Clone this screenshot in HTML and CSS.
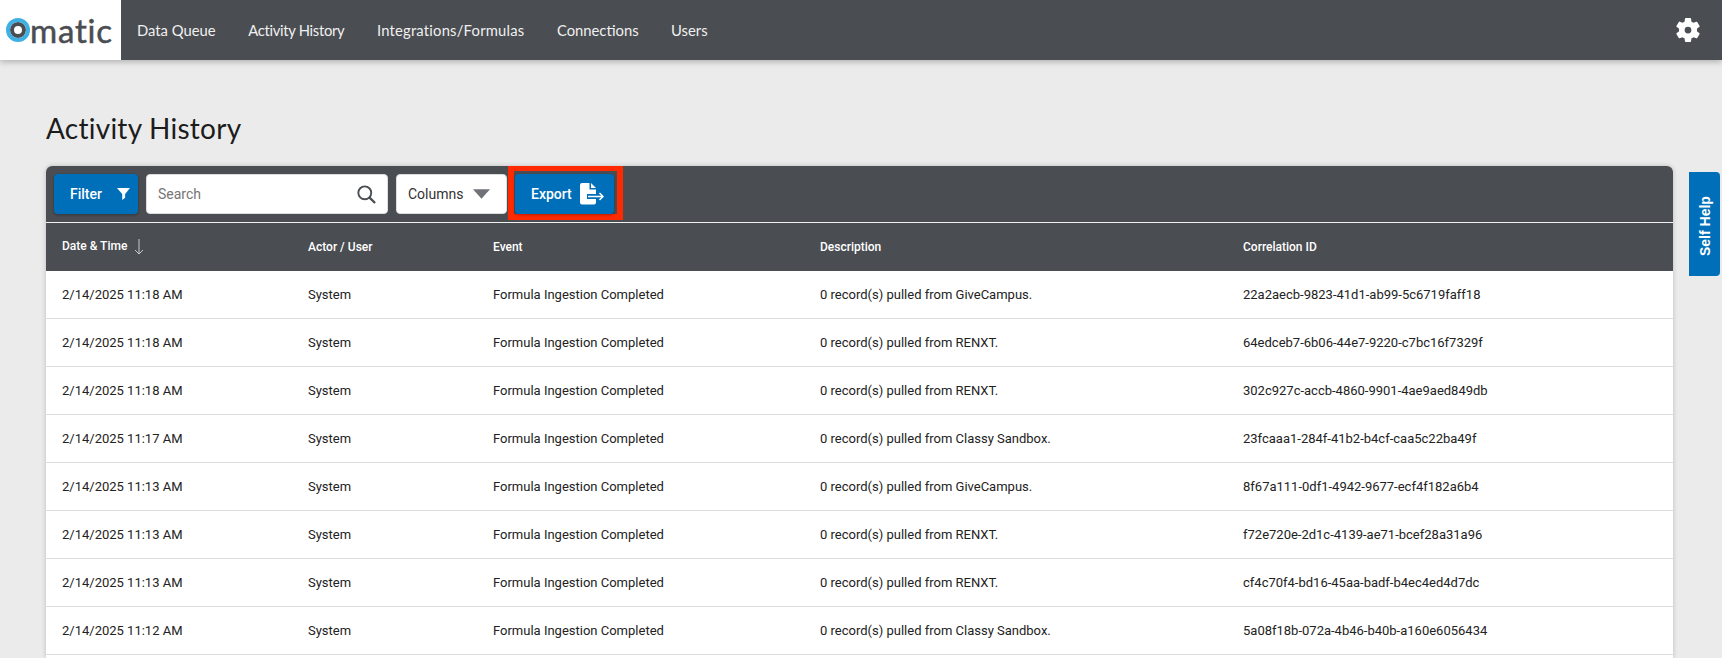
FILE: index.html
```html
<!DOCTYPE html>
<html lang="en">
<head>
    <meta charset="UTF-8">
    <title>Activity History</title>
    <link rel="stylesheet" href="styles.css">
</head>
<body>
    <header class="topbar">
        <a class="logo"><span class="logo-ring"></span><span class="logo-text">matic</span></a>
        <nav class="nav-links">
            <a>Data Queue</a>
            <a class="nav-tight">Activity History</a>
            <a class="nav-wide">Integrations/Formulas</a>
            <a>Connections</a>
            <a>Users</a>
        </nav>
        <svg class="gear" viewBox="0 0 24 24"><path fill-rule="evenodd" d="M19.14 12.94c.04-.3.06-.61.06-.94 0-.32-.02-.64-.07-.94l2.03-1.58c.18-.14.23-.41.12-.61l-1.92-3.32c-.12-.22-.37-.29-.59-.22l-2.39.96c-.5-.38-1.03-.7-1.62-.94l-.36-2.54c-.04-.24-.24-.41-.48-.41h-3.84c-.24 0-.43.17-.47.41l-.36 2.54c-.59.24-1.13.57-1.62.94l-2.39-.96c-.22-.08-.47 0-.59.22L2.74 8.87c-.12.21-.08.47.12.61l2.03 1.58c-.05.3-.09.63-.09.94s.02.64.07.94l-2.03 1.58c-.18.14-.23.41-.12.61l1.92 3.32c.12.22.37.29.59.22l2.39-.96c.5.38 1.03.7 1.62.94l.36 2.54c.05.24.24.41.48.41h3.84c.24 0 .44-.17.47-.41l.36-2.54c.59-.24 1.13-.56 1.62-.94l2.39.96c.22.08.47 0 .59-.22l1.92-3.32c.12-.22.07-.47-.12-.61l-2.01-1.58zM12 14.7a2.7 2.7 0 1 1 0-5.4 2.7 2.7 0 0 1 0 5.4z"/></svg>
    </header>

    <main class="content">
        <h1>Activity History</h1>

        <section class="card">
            <div class="toolbar">
                <button class="btn btn-filter">
                    Filter
                    <svg viewBox="0 0 12 11" width="13" height="12"><path d="M0 0h12L7.500 5.500v3.500L4.800 11V5.500z" fill="#fff"/></svg>
                </button>
                <div class="search">
                    <span>Search</span>
                    <svg viewBox="0 0 20 20" width="19" height="19"><circle cx="8.200" cy="8.200" r="6.800" fill="none" stroke="#4a4d52" stroke-width="2"/><path d="M13 13l6 6" stroke="#4a4d52" stroke-width="2.400"/></svg>
                </div>
                <button class="btn-columns">
                    Columns
                    <svg viewBox="0 0 16 9" width="17" height="10"><path d="M0 0h16L8 9z" fill="#6f7276"/></svg>
                </button>
                <div class="export-mark">
                    <button class="btn btn-export">
                        Export
                        <svg viewBox="0 0 24 22" width="24" height="22">
                            <path d="M2 0h7.500v6.500H16v13a2 2 0 0 1-2 2H2a2 2 0 0 1-2-2V2a2 2 0 0 1 2-2z" fill="#fff"/>
                            <path d="M11 0l5 5h-5z" fill="#fff"/>
                            <rect x="7" y="11" width="10" height="5" fill="#006fba"/>
                            <path d="M8 13.500h15M19.500 10l3.500 3.500-3.500 3.500" fill="none" stroke="#fff" stroke-width="1.500"/>
                        </svg>
                    </button>
                </div>
            </div>

            <table class="history">
                <colgroup>
                    <col class="col-date">
                    <col class="col-actor">
                    <col class="col-event">
                    <col class="col-desc">
                    <col>
                </colgroup>
                <thead>
                    <tr>
                        <th>Date &amp; Time <svg class="sort" viewBox="0 0 10 16" width="10" height="16"><path d="M5 0v15M1 11l4 4 4-4" fill="none" stroke="#c9cacc" stroke-width="1"/></svg></th>
                        <th>Actor / User</th>
                        <th>Event</th>
                        <th>Description</th>
                        <th>Correlation ID</th>
                    </tr>
                </thead>
                <tbody>
                    <tr><td>2/14/2025 11:18 AM</td><td>System</td><td>Formula Ingestion Completed</td><td>0 record(s) pulled from GiveCampus.</td><td>22a2aecb-9823-41d1-ab99-5c6719faff18</td></tr>
                    <tr><td>2/14/2025 11:18 AM</td><td>System</td><td>Formula Ingestion Completed</td><td>0 record(s) pulled from RENXT.</td><td>64edceb7-6b06-44e7-9220-c7bc16f7329f</td></tr>
                    <tr><td>2/14/2025 11:18 AM</td><td>System</td><td>Formula Ingestion Completed</td><td>0 record(s) pulled from RENXT.</td><td>302c927c-accb-4860-9901-4ae9aed849db</td></tr>
                    <tr><td>2/14/2025 11:17 AM</td><td>System</td><td>Formula Ingestion Completed</td><td>0 record(s) pulled from Classy Sandbox.</td><td>23fcaaa1-284f-41b2-b4cf-caa5c22ba49f</td></tr>
                    <tr><td>2/14/2025 11:13 AM</td><td>System</td><td>Formula Ingestion Completed</td><td>0 record(s) pulled from GiveCampus.</td><td>8f67a111-0df1-4942-9677-ecf4f182a6b4</td></tr>
                    <tr><td>2/14/2025 11:13 AM</td><td>System</td><td>Formula Ingestion Completed</td><td>0 record(s) pulled from RENXT.</td><td>f72e720e-2d1c-4139-ae71-bcef28a31a96</td></tr>
                    <tr><td>2/14/2025 11:13 AM</td><td>System</td><td>Formula Ingestion Completed</td><td>0 record(s) pulled from RENXT.</td><td>cf4c70f4-bd16-45aa-badf-b4ec4ed4d7dc</td></tr>
                    <tr><td>2/14/2025 11:12 AM</td><td>System</td><td>Formula Ingestion Completed</td><td>0 record(s) pulled from Classy Sandbox.</td><td>5a08f18b-072a-4b46-b40b-a160e6056434</td></tr>
                </tbody>
            </table>
        </section>
    </main>

    <a class="self-help">Self Help</a>
</body>
</html>
```

FILE: styles.css
```css
* {
    margin: 0;
    padding: 0;
    box-sizing: border-box;
}

html, body {
    height: 658px;
    overflow: hidden;
}

body {
    font-family: Roboto, "Liberation Sans", sans-serif;
    background: #ebebeb;
    color: #222;
}

.topbar {
    height: 60px;
    background: #4a4d52;
    display: flex;
    align-items: center;
    box-shadow: 0 2px 6px rgba(0, 0, 0, 0.25);
    padding-right: 19px;
}

.logo {
    width: 121px;
    height: 60px;
    background: white;
    display: flex;
    align-items: center;
    padding-left: 6px;
}

.logo-ring {
    width: 24px;
    height: 24px;
    border-radius: 50%;
    border: 4px solid #3fb0e3;
    background: white;
    box-shadow: inset 0 0 0 4px #4a4d52;
    flex-shrink: 0;
}

.logo-text {
    font-family: Lato, sans-serif;
    font-size: 33px;
    color: #4a4d52;
    line-height: 1;
    letter-spacing: 0.8px;
    -webkit-text-stroke: 0.5px #4a4d52;
}

.nav-links {
    display: flex;
    gap: 32.5px;
    padding-left: 16px;
    flex: 1;
}

.nav-links a {
    font-family: Lato, sans-serif;
    font-size: 14.8px;
    color: #f0f0f0;
}

/* lato runs a bit off raleway on these two */
.nav-links .nav-tight {
    letter-spacing: -0.3px;
}

.nav-links .nav-wide {
    letter-spacing: 0.2px;
}

.gear {
    width: 30px;
    height: 30px;
    fill: white;
}

.content {
    padding: 0 49px 0 46px;
}

h1 {
    font-family: Lato, sans-serif;
    font-weight: 400;
    font-size: 28px;
    line-height: 36px;
    letter-spacing: 0.25px;
    color: #1c1c1c;
    margin-top: 50px;
    margin-bottom: 20px;
}

.card {
    height: 492px;
    border-radius: 6px 6px 0 0;
    background: white;
    box-shadow: 0 0 5px rgba(0, 0, 0, 0.2);
    overflow: hidden;
}

.toolbar {
    height: 57px;
    background: #4a4d52;
    display: flex;
    align-items: center;
    gap: 8px;
    padding-left: 8px;
    border-bottom: 1px solid #f0f0f0;
}

.btn {
    height: 40px;
    background: #006fba;
    color: white;
    border: none;
    border-radius: 4px;
    font-family: Roboto, sans-serif;
    font-size: 14px;
    font-weight: 500;
    display: flex;
    align-items: center;
    box-shadow: 0 1px 3px rgba(0, 0, 0, 0.3);
}

.btn-filter {
    width: 84px;
    padding-left: 16px;
    gap: 15px;
}

.search {
    width: 242px;
    height: 40px;
    background: white;
    border: 1px solid #ddd;
    border-radius: 4px;
    display: flex;
    align-items: center;
    justify-content: space-between;
    padding: 0 11px 0 11px;
    font-size: 14px;
    color: #757575;
}

.btn-columns {
    width: 111px;
    height: 40px;
    background: white;
    border: 1px solid #ddd;
    border-radius: 4px;
    font-family: Roboto, sans-serif;
    font-size: 14px;
    color: #333;
    display: flex;
    align-items: center;
    gap: 10px;
    padding-left: 11px;
}

.export-mark {
    border: 6px solid #ff2a00;
    height: 55px;
    width: 115px;
    margin-left: -7px;
    margin-top: -1px;
    align-self: flex-start;
    padding: 3px 0 0 1px;
    background: #4a4d52;
}

.btn-export {
    width: 99px;
    padding-left: 16px;
    gap: 8px;
}

.history {
    width: 100%;
    border-collapse: collapse;
    table-layout: fixed;
}

.col-date { width: 262px; }
.col-actor { width: 185px; }
.col-event { width: 327px; }
.col-desc { width: 423px; }

.history th {
    height: 48px;
    background: #4a4d52;
    color: white;
    font-size: 12px;
    font-weight: 500;
    text-align: left;
    padding-left: 16px;
}

.history td {
    height: 48px;
    font-size: 13px;
    color: #222;
    padding-left: 16px;
    border-bottom: 1px solid #dedede;
}

.history tbody tr:first-child td {
    height: 47px;
}

.history td:nth-child(n+2),
.history th:nth-child(n+2) {
    padding-left: 0;
}

.sort {
    vertical-align: middle;
    margin-left: 4px;
}

.self-help {
    position: absolute;
    top: 172px;
    left: 1689px;
    width: 31px;
    height: 104px;
    padding-bottom: 5px;
    background: #006fba;
    border-radius: 4px 0 0 4px;
    color: white;
    font-family: "Liberation Sans", sans-serif;
    font-size: 14px;
    font-weight: 700;
    writing-mode: vertical-rl;
    transform: rotate(180deg);
    display: flex;
    align-items: center;
    justify-content: center;
}
```
